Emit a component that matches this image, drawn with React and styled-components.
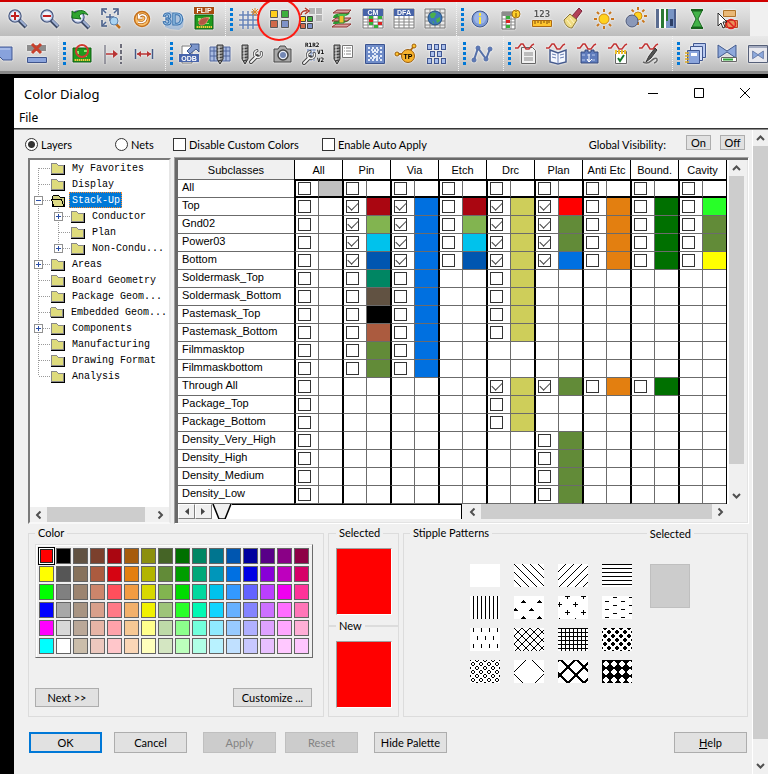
import React from 'react';
import styled, { createGlobalStyle, css } from 'styled-components';

const sans = "Lato, 'Liberation Sans', sans-serif";
const arial = "'Liberation Sans', Arial, sans-serif";
const mono = "'Liberation Mono', 'Courier New', monospace";

const GlobalStyle = createGlobalStyle`
  * {
    box-sizing: border-box;
  }

  body {
    margin: 0;
    background: #000;
    color: #000;
    font-family: ${sans};
    font-size: 11px;
    line-height: 14px;
  }

  button {
    font: inherit;
    color: inherit;
    padding: 0;
    margin: 0;
  }
`;

/* ---------- Toolbars ---------- */

const Toolbars = styled.header`
  border-top: 2px solid #d00000;
  border-bottom: 3px solid #8a8a8a;
  background: #f0f0f0;
  overflow: hidden;
`;

const ToolRow = styled.div`
  display: flex;
  height: ${({ $tall }) => ($tall ? '35px' : '34px')};
  padding-left: ${({ $inset }) => $inset || '0'};
  margin-right: ${({ $end }) => $end || '0'};
  background: linear-gradient(#e9e9e9, #d6d6d6 50%, #bcbcbc);
`;

const ToolGroup = styled.div`
  display: flex;
  flex: none;
  align-items: center;
  margin-left: ${({ $cut }) => ($cut ? '-10px' : '0')};
  padding-right: 6px;
  margin-right: 4px;
  border-right: 1px dotted #f4f4f4;

  &:last-child {
    border-right: 0;
  }
`;

const Grip = styled.span`
  width: 3px;
  height: 23px;
  background: repeating-linear-gradient(#0078d7 0 3px, transparent 3px 5px);
`;

const Tool = styled.button`
  position: relative;
  display: flex;
  align-items: center;
  justify-content: center;
  width: 31px;
  height: 30px;
  border: 0;
  background: none;

  svg {
    flex: none;
    filter: drop-shadow(0 0 1px #fff);
  }
`;

const Ring = styled.span`
  position: absolute;
  z-index: 2;
  top: -6px;
  left: -7px;
  width: 44px;
  height: 43px;
  border: 2px solid #ff1a12;
  border-radius: 50%;
`;

const Lens = ({ cx = 9, cy = 9 }) => (
  <g>
    <path d={`M${cx + 4} ${cy + 4}l7 7`} stroke="#3d4a66" strokeWidth="4" />
    <path d={`M${cx + 5} ${cy + 4}l6 6`} stroke="#9fb0d4" strokeWidth="2" />
    <circle cx={cx} cy={cy} r="6" fill="#f2f4fb" stroke="#4a5a80" strokeWidth="1.5" />
    <circle cx={cx} cy={cy} r="5" fill="none" stroke="#a9b8dc" />
  </g>
);

const Board = ({ y = 4 }) => (
  <g>
    <path d={`M3 ${y}h18v14H3z`} fill="#1f9a1f" stroke="#0c5c10" />
    <path d={`M4 ${y + 11}h16v2H4z`} fill="#e5d23a" />
    <path d={`M4 ${y + 12}h16`} stroke="#1a6a1a" strokeDasharray="1 1" />
    <path d={`M6 ${y + 3}h3v3H6zM14 ${y + 2}h4v2h-4zM8 ${y + 8}h9v1H8z`} fill="#8bea6a" />
  </g>
);

const Wave = () => (
  <path d="M0 6h3l3-4h2l3 5h3l3-4 2-1" fill="none" stroke="#c23434" strokeWidth="1.5" />
);

const Screw = ({ x = 9 }) => (
  <g>
    <path d={`M${x} 3h6v14l-3 5-3-5z`} fill="#9a9a9a" stroke="#333" />
    <path d={`M${x} 7l6-1M${x} 10l6-1M${x} 13l6-1M${x} 16l6-1M${x + 1} 19l4-1`} stroke="#333" />
    <path d={`M${x + 2} 4v14`} stroke="#e6e6e6" />
  </g>
);

const Wrench = ({ x = 0, y = 0 }) => (
  <g transform={`translate(${x} ${y})`} strokeLinecap="round">
    <path d="M2 12l6-6" stroke="#444" strokeWidth="4" />
    <circle cx="9" cy="4" r="3.5" fill="none" stroke="#444" strokeWidth="3" strokeDasharray="17 5" strokeDashoffset="2" />
    <circle cx="9" cy="4" r="3.5" fill="none" stroke="#f2f2f2" strokeWidth="1.5" strokeDasharray="17 5" strokeDashoffset="2" />
    <path d="M2 12l5-5" stroke="#f2f2f2" strokeWidth="2" />
  </g>
);

const Sun = ({ cx = 12, cy = 12, r = 5 }) => (
  <g>
    {[0, 45, 90, 135, 180, 225, 270, 315].map(deg => (
      <path
        key={deg}
        d={`M${cx} ${cy - r - 2}v-3`}
        stroke="#c8761c"
        strokeWidth="2"
        transform={`rotate(${deg} ${cx} ${cy})`}
      />
    ))}
    <circle cx={cx} cy={cy} r={r} fill="#ffd21e" stroke="#cf8a14" />
  </g>
);

const Sheet = ({ title }) => (
  <g>
    <path d="M2 2h20v19H2z" fill="#fff" stroke="#777" />
    <path d="M2 12h20M2 15h20M2 18h20M7 9v12M12 9v12M17 9v12" stroke="#888" />
    <path d="M2 2h20v7H2z" fill="#4763a8" />
    <text x="12" y="8" textAnchor="middle" fontSize="7" fontWeight="bold" fill="#fff" fontFamily={arial}>
      {title}
    </text>
  </g>
);

const Bowtie = ({ y = 4, s = 1 }) => (
  <path
    transform={`translate(${12 - 9 * s} ${y}) scale(${s})`}
    d="M0 0l9 6 9-6v13L9 7l-9 6z"
    fill="#8ea9dc"
    stroke="#3f5688"
  />
);

const glyphs = {
  'Zoom In': (
    <g>
      <Lens />
      <path d="M9 5v8M5 9h8" stroke="#c22020" strokeWidth="2" />
    </g>
  ),
  'Zoom Out': (
    <g>
      <Lens cx={10} />
      <path d="M6 9h8" stroke="#c22020" strokeWidth="2" />
    </g>
  ),
  'Zoom Previous': (
    <g>
      <Lens cx={10} cy={10} />
      <path d="M4 11V4l3 2c5-4 10-3 13 2-4-2-7-2-9 1l2 3z" fill="#2fa52f" stroke="#126b18" />
    </g>
  ),
  'Zoom Fit': (
    <g>
      <path d="M3 8V2h5M14 2h5v6M3 13v6h5" fill="none" stroke="#3f5680" strokeWidth="1.5" />
      <path d="M4 3l3 3M18 3l-3 3M4 18l3-3M11 7v7M7 10h8" stroke="#4b6595" strokeWidth="1.5" />
      <path d="M17 17l4 4" stroke="#bf6f1d" strokeWidth="2.5" />
      <circle cx="15" cy="14" r="4" fill="#a9d3f2" stroke="#5d82ac" />
    </g>
  ),
  Redraw: (
    <g>
      <circle cx="12" cy="12" r="7.5" fill="#fbc069" stroke="#c5701c" strokeWidth="1.5" />
      <path d="M8.5 7v4h4M9 10c2-4 8-2 7 2-1 4-5 4-8 3" fill="none" stroke="#b5651a" strokeWidth="3" />
      <path d="M8.5 7v4h4M9 10c2-4 8-2 7 2-1 4-5 4-8 3" fill="none" stroke="#fff" strokeWidth="1.5" />
    </g>
  ),
  '3D View': (
    <g>
      <path d="M4 7l5-3 3 2 7 1 4 5-1 8-4 3-9-1-5-2z" fill="#7fa3cf" opacity=".6" />
      <text
        x="12"
        y="18"
        textAnchor="middle"
        fontFamily={arial}
        fontSize="16"
        fontWeight="bold"
        fill="#9cc8ec"
        stroke="#3c71ab"
      >
        3D
      </text>
    </g>
  ),
  'Flip Board': (
    <g>
      <Board y={8} />
      <path d="M7 17c-1-5 5-7 10-6l-3 5c-2 2-5 3-7 1z" fill="#b35743" stroke="#e07a66" />
      <path d="M2 0h20v7H2z" fill="#a84c10" />
      <text x="12" y="6" textAnchor="middle" fontSize="7" fontWeight="bold" fill="#fff" fontFamily={arial}>FLIP</text>
    </g>
  ),
  Grid: (
    <g>
      <path d="M2 8h19M2 13h19M2 18h19M6 4v18M11 4v18M16 4v18" stroke="#6884b8" strokeWidth="1.5" />
      <path d="M18 1v8M14 5h8M15 2l6 6M21 2l-6 6" stroke="#d98521" />
    </g>
  ),
  Color: (
    <g stroke="#595959">
      <path d="M2.5 3.5h7v7h-7z" fill="#ffcf1c" />
      <path d="M13.5 3.5h7v7h-7z" fill="#3eb03e" />
      <path d="M2.5 13.5h7v7h-7z" fill="#cf6a4a" />
      <path d="M13.5 13.5h7v7h-7z" fill="#7f93c8" />
    </g>
  ),
  'Assign Color': (
    <g>
      <path d="M10 1h6v6h-6zM17 1h6v6h-6zM17 8h6v6h-6z" fill="#b4b4b4" />
      <path d="M2 8c0-3 3-5 6-4M6 1l4 3-4 3" fill="none" stroke="#b33a2a" strokeWidth="1.5" />
      <g stroke="#444">
        <path d="M1.5 9.5h5v5h-5z" fill="#ffcf1c" />
        <path d="M8.5 9.5h5v5h-5z" fill="#3eb03e" />
        <path d="M1.5 16.5h5v5h-5z" fill="#cf6a4a" />
        <path d="M8.5 16.5h5v5h-5z" fill="#7f93c8" />
      </g>
    </g>
  ),
  'Cross Section': (
    <g>
      <path d="M2 20h15l4-3H6z" fill="#d9a0a0" stroke="#8e2f2f" />
      <path d="M5 17c0-4 13-2 13-6M5 11c0-4 12-2 13-6" stroke="#2b9a34" strokeWidth="4" />
      <path d="M2 14h15l4-3H6z" fill="#d9a0a0" stroke="#8e2f2f" />
      <path d="M9 7h5v9H9z" fill="#f0c02c" stroke="#2b8a30" />
      <path d="M3 6h15l3-3H7z" fill="#d9a0a0" stroke="#8e2f2f" />
      <path d="M8 8h8" stroke="#49c04f" strokeWidth="2" />
    </g>
  ),
  'Constraint Manager': (
    <g>
      <Sheet title="CM" />
      <path d="M8 9h4v3H8zM17 9h4v3h-4zM8 15h4v3H8zM13 18h4v3h-4z" fill="#36b03a" />
      <path d="M8 12h4v3H8zM17 15h4v3h-4z" fill="#dd2222" />
    </g>
  ),
  'DFA Table': <Sheet title="DFA" />,
  'Global Sheet': (
    <g>
      <path d="M2 2h20v19H2z" fill="#e9e9e9" stroke="#777" />
      <path d="M2 6h20M2 10h20M2 14h20M2 18h20M7 2v19M12 2v19M17 2v19" stroke="#888" />
      <circle cx="12" cy="11" r="7" fill="#3d78b8" stroke="#24507f" />
      <path d="M7 8c1-3 5-3 6-1l-2 4H8zM13 12l4-2v4l-3 2zM9 14l2 1v2z" fill="#4cb04a" />
    </g>
  ),
  Info: (
    <g>
      <circle cx="12" cy="12" r="8" fill="#7a98d4" stroke="#43598c" />
      <circle cx="12" cy="11" r="6" fill="#9db5e6" />
      <path d="M11 6h2v3h-2zM11 10h2v7h-2z" fill="#ffe838" />
    </g>
  ),
  'Show Report': (
    <g>
      <path d="M3 5h13v17H3z" fill="#fff" stroke="#666" />
      <path d="M3 5h13v4H3z" fill="#8c8c8c" />
      <path d="M3 12h13M3 15h13M3 18h13M7 9v13M12 9v13" stroke="#888" />
      <path d="M7 9h4v3H7zM7 18h4v3H7z" fill="#36b03a" />
      <path d="M7 13h4v3H7z" fill="#dd2222" />
      <circle cx="17" cy="7" r="4" fill="#ffd12a" stroke="#a5701a" />
      <path d="M17 4v1M17 6v4" stroke="#7a4c00" />
    </g>
  ),
  Measure: (
    <g>
      <text x="12" y="10" textAnchor="middle" fontSize="9" fontWeight="bold" fill="#555" fontFamily="'DejaVu Sans Mono', monospace">123</text>
      <path d="M2.5 13.5h19v6h-19z" fill="#ffc52e" stroke="#ad6a12" />
      <path d="M5 14v3M8 14v2M11 14v3M14 14v2M17 14v3M19 14v2" stroke="#7d4a0a" />
    </g>
  ),
  Clean: (
    <g>
      <path d="M11 9l7-8 3 3-6 8z" fill="#b24058" stroke="#7a2036" />
      <path d="M9 7l7 6-5 8c-4 0-7-3-8-8z" fill="#f0dc84" stroke="#8a7634" />
      <path d="M6 13l4 5M9 11l4 5" stroke="#fff6c4" />
    </g>
  ),
  'Shadow Off': <Sun />,
  'Shadow On': (
    <g>
      <Sun cx={15} cy={9} r={4} />
      <circle cx="9" cy="14" r="6" fill="#8a98b8" stroke="#4c5878" />
    </g>
  ),
  Layers: (
    <g>
      <path d="M2 2h20v19H2z" fill="#7894c4" />
      <path d="M2 2h3v19H2z" fill="#5a6c90" />
      <path d="M5 2h2v19H5zM10 2h2v19h-2z" fill="#fff" />
      <path d="M7 2h3v19H7zM12 2h2v12h-2z" fill="#2a7a34" />
      <path d="M16 12h3v7h-3z" fill="#2d3f66" />
      <path d="M20 2h2v19h-2z" fill="#4a5d8c" />
    </g>
  ),
  Waive: (
    <g>
      <path d="M7 4h10l-4 8 4 8H7l4-8z" fill="#43b348" stroke="#17641c" />
      <path d="M6 3h12M6 21h12" stroke="#17641c" strokeWidth="2" />
    </g>
  ),
  'Drc Select': (
    <g>
      <path d="M7.5 3.5h12v6h-12z" fill="#e9b877" stroke="#b07328" />
      <path d="M9.5 13.5h12v7h-12z" fill="#e9905a" stroke="#b04a28" />
      <circle cx="15" cy="17" r="4.5" fill="none" stroke="#e02020" strokeWidth="1.5" />
      <path d="M12 14l6 6" stroke="#e02020" strokeWidth="1.5" />
      <path d="M2 6v13l3-3 2 5 2-1-2-5h4z" fill="#fff" stroke="#222" />
    </g>
  ),
  Shape: (
    <g>
      <path d="M0 5h18v13H9l-9-9z" fill="#88a2dc" stroke="#3e5590" />
      <path d="M2 7h14" stroke="#c6d4f4" />
    </g>
  ),
  'Delete Shape': (
    <g>
      <path d="M2 3h19v6H2z" fill="#8d8d8d" />
      <path d="M7 2l9 9M16 2l-9 9" stroke="#c8402c" strokeWidth="3" />
      <path d="M2.5 15.5h19v5h-19z" fill="#8ba4dc" stroke="#3f548c" />
    </g>
  ),
  'Board Circle': (
    <g>
      <Board y={6} />
      <circle cx="12" cy="9" r="6" fill="none" stroke="#cf3a30" strokeWidth="2" />
    </g>
  ),
  'Align Right': (
    <g>
      <path d="M4 3v19" stroke="#556" />
      <path d="M20 2v20" stroke="#445" strokeWidth="1.5" strokeDasharray="4 2" />
      <path d="M5 12h9" stroke="#b83434" strokeWidth="1.5" />
      <path d="M12 8l5 4-5 4z" fill="#b83434" />
    </g>
  ),
  'Spacing Width': (
    <g>
      <path d="M3.5 7v10M20.5 7v10" stroke="#445a85" strokeWidth="1.5" />
      <path d="M5 12h14" stroke="#b83434" strokeWidth="1.5" />
      <path d="M5 12l4-3v6zM19 12l-4-3v6z" fill="#b83434" />
    </g>
  ),
  ODB: (
    <g>
      <path d="M5 4h10v17H5z" fill="#fff" stroke="#777" />
      <path d="M10 9l5-5-2-2h9v8l-3-3-6 5z" fill="#7c96cc" stroke="#3f5688" />
      <path d="M2 12h20v8H2z" fill="#4865ac" />
      <text x="12" y="19" textAnchor="middle" fontSize="7" fontWeight="bold" fill="#fff" fontFamily={arial}>ODB</text>
    </g>
  ),
  'Drill Grid': (
    <g>
      <path d="M2 5h20v14H2z" fill="#a9bbe2" stroke="#4e659c" />
      <path d="M2 9h20M2 14h20M6 5v14M18 5v14" stroke="#4e659c" />
      <Screw />
    </g>
  ),
  'Drill Setup': (
    <g>
      <Screw x={3} />
      <Wrench x={10} y={8} />
    </g>
  ),
  Snapshot: (
    <g>
      <path d="M4 7h4l2-3h5l2 3h4v13H4z" fill="#a9a9a9" stroke="#444" />
      <circle cx="13" cy="13" r="5" fill="#e9eef8" stroke="#444" strokeWidth="1.5" />
      <circle cx="13" cy="13" r="3" fill="#7387b4" />
    </g>
  ),
  'Auto Rename': (
    <g>
      <path d="M6 8h9M6 11h9M6 14h9M7 7v12M10 7v12M13 7v12" stroke="#7d93c4" />
      <Wrench x={1} y={9} />
      <g fontFamily="'DejaVu Sans Mono', monospace" fontSize="6" fontWeight="bold" fill="#000">
        <text x="4" y="5">R1R2</text>
        <text x="16" y="12">V1</text>
        <text x="16" y="20">V2</text>
      </g>
    </g>
  ),
  'Drill Legend': (
    <g>
      <Screw x={2} />
      <path d="M10.5 3.5h10v12h-10z" fill="#fff" stroke="#777" />
      <path d="M12 6h1M14 6h5M12 9h1M14 9h5M12 12h1M14 12h5" stroke="#888" />
    </g>
  ),
  'Testprep Auto': (
    <g>
      <path d="M2.5 2.5h19v19h-19z" fill="#6f8cc8" stroke="#3a5390" />
      <path d="M5 6h15M5 10h15M5 14h15M5 18h15" stroke="#e5ecfa" strokeWidth="2" strokeDasharray="2 2" />
      <path d="M8 8h8M7 16h10M12 8v8" stroke="#fff" strokeWidth="1.5" strokeDasharray="2 1" />
    </g>
  ),
  Testpoint: (
    <g>
      <path d="M3 12h6M16 9l4-5" stroke="#b06e14" strokeWidth="2" />
      <circle cx="20" cy="4" r="2" fill="#ffc52e" stroke="#9a5c0c" />
      <circle cx="3" cy="12" r="2" fill="#ffc52e" stroke="#9a5c0c" />
      <circle cx="14" cy="14" r="6.5" fill="#f7b32c" stroke="#9a5c0c" />
      <text x="14" y="17" textAnchor="middle" fontSize="7" fontWeight="bold" fontFamily={arial} fill="#000">TP</text>
    </g>
  ),
  Placement: (
    <g fill="#a9bfec" stroke="#3f5590">
      {[[2, 3], [9, 3], [16, 3], [5, 10], [12, 10], [2, 17], [9, 17], [16, 17]].map(([x, y]) => (
        <rect key={`${x}-${y}`} x={x + 0.5} y={y - 0.5} width="4" height="5" />
      ))}
    </g>
  ),
  Route: (
    <g fill="#5c78b8" stroke="#5570a8">
      <path d="M4 18l4-12 8 11 4-10" fill="none" strokeWidth="2" />
      <circle cx="4" cy="18" r="2" />
      <circle cx="8" cy="6" r="2" />
      <circle cx="16" cy="17" r="2" />
      <circle cx="20" cy="7" r="2" />
    </g>
  ),
  'Wave Report': (
    <g>
      <path d="M6.5 5.5h11l3 3v13h-14z" fill="#f1f1f1" stroke="#666" />
      <path d="M9 11h9M9 13h9M9 16h9M9 18h9" stroke="#888" />
      <Wave />
    </g>
  ),
  'Wave Library': (
    <g>
      <path d="M4 8l8 3 8-3v12l-8 2-8-2z" fill="#f5f8ff" stroke="#44598c" strokeWidth="1.5" />
      <path d="M12 11v11M6 12l4 1M6 15l4 1M14 13l4-1M14 16l4-1" stroke="#6a80b4" />
      <Wave />
    </g>
  ),
  'Wave Audit': (
    <g>
      <path d="M4 10h4V8h3v2h3V8h3v2h4v11H4z" fill="#5f7cbc" stroke="#34497c" />
      <path d="M5 13h15M5 18h15" stroke="#b9c9ee" strokeDasharray="3 2" />
      <path d="M12 12v8M10 17l2 3 3-3" stroke="#fff" fill="none" />
      <Wave />
    </g>
  ),
  'Wave Check': (
    <g>
      <path d="M7.5 9.5h11v12h-11z" fill="#fff" stroke="#666" />
      <path d="M7 10h12" stroke="#efbf28" strokeWidth="4" strokeDasharray="2 1" />
      <path d="M10 16l2 3 4-6" fill="none" stroke="#17782a" strokeWidth="2" />
      <Wave />
    </g>
  ),
  'Wave Probe': (
    <g>
      <path d="M16 6l-6 8-3 6 5-4 6-8z" fill="#555" stroke="#333" />
      <path d="M4 20c4 2 6 1 8-1s5-4 6-2-2 4-3 4" fill="none" stroke="#666" strokeWidth="1.5" />
      <Wave />
    </g>
  ),
  Books: (
    <g>
      <path d="M9.5 1.5h12v14h-12z" fill="#b9caf0" stroke="#3f5690" />
      <path d="M6.5 4.5h12v14h-12z" fill="#d8e2f8" stroke="#3f5690" />
      <path d="M3.5 8.5h12v13h-12z" fill="#8ba5dc" stroke="#3f5690" />
      <path d="M7 11h6v3H7z" fill="#fff" />
      <path d="M1 11h4M1 14h4M1 17h4M1 20h4" stroke="#dba820" strokeWidth="1.5" />
    </g>
  ),
  'Net Progress': (
    <g>
      <Bowtie y={3} />
      <path d="M6.5 15.5h15v4h-15z" fill="#fff" stroke="#666" />
      <path d="M8 17.5h10" stroke="#2fa536" strokeWidth="2" />
    </g>
  ),
  'Net Window': (
    <g>
      <path d="M2.5 3.5h19v17h-19z" fill="#e8e8ee" stroke="#555f78" />
      <path d="M3 5h18" stroke="#a5acc0" strokeWidth="2" />
      <Bowtie y={9} s={0.6} />
    </g>
  ),
};

const topGroups = [
  ['Zoom In', 'Zoom Out', 'Zoom Previous', 'Zoom Fit', 'Redraw', '3D View', 'Flip Board'],
  ['Grid', 'Color', 'Assign Color', 'Cross Section', 'Constraint Manager', 'DFA Table', 'Global Sheet'],
  ['Info', 'Show Report', 'Measure', 'Clean', 'Shadow Off', 'Shadow On', 'Layers', 'Waive', 'Drc Select'],
];

const bottomGroups = [
  ['Shape', 'Delete Shape'],
  ['Board Circle', 'Align Right', 'Spacing Width'],
  ['ODB', 'Drill Grid', 'Drill Setup', 'Snapshot', 'Auto Rename', 'Drill Legend', 'Testprep Auto', 'Testpoint', 'Placement'],
  ['Route'],
  ['Wave Report', 'Wave Library', 'Wave Audit', 'Wave Check', 'Wave Probe'],
  ['Books', 'Net Progress', 'Net Window'],
];

const renderGroups = (groups, cut) => groups.map((names, i) => (
  <ToolGroup key={names[0]} $cut={cut && i === 0}>
    {i > 0 && <Grip />}
    {names.map(name => (
      <Tool key={name} type="button" aria-label={name}>
        <svg width="24" height="24" viewBox="0 0 24 24" fill="none">{glyphs[name]}</svg>
        {name === 'Color' && <Ring />}
      </Tool>
    ))}
  </ToolGroup>
));

/* ---------- Dialog frame ---------- */

const Dialog = styled.main`
  margin: 4px 0 1px 14px;
  background: #f0f0f0;
`;

const TitleBar = styled.div`
  display: flex;
  align-items: center;
  justify-content: space-between;
  height: 32px;
  padding-left: 10px;
  background: #fff;

  h1 {
    margin: 0;
    font: 400 13px/18px 'Noto Sans', sans-serif;
  }
`;

const WindowButton = styled.button`
  width: 46px;
  height: 32px;
  border: 0;
  background: none;

  svg {
    display: block;
    margin: 0 auto;
  }
`;

const MenuBar = styled.nav`
  height: 20px;
  padding-left: 5px;
  background: #fff;
  border-bottom: 2px groove #8a8a8a;

  button {
    display: block;
    border: 0;
    background: none;
    font: 400 12px/16px 'Noto Sans', sans-serif;
  }
`;

const DialogBody = styled.div`
  display: flex;
`;

const Content = styled.div`
  flex: 1;
  min-width: 0;
  padding: 0 3px 21px 14px;
  border-right: 1px solid #fff;
`;

const ScrollTrack = styled.div`
  display: flex;
  flex: ${({ $grow }) => ($grow ? '1' : 'none')};
  flex-direction: ${({ $vertical }) => ($vertical ? 'column' : 'row')};
  ${({ $vertical }) => ($vertical ? 'width: 15px;' : 'height: 15px;')}
  min-width: 0;
  background: #f0f0f0;
`;

const ScrollArrow = styled.button`
  display: flex;
  flex: none;
  align-items: center;
  justify-content: center;
  width: ${({ $size }) => $size}px;
  height: 16px;
  border: 0;
  background: none;

  svg {
    transform: rotate(${({ $turn }) => $turn}deg);
  }
`;

const ScrollThumb = styled.div`
  flex: 1;
  margin: ${({ $tail, $vertical }) => ($vertical ? `0 0 ${$tail}px` : `0 ${$tail}px 0 0`)};
  background: #cdcdcd;
`;

const Chevron = () => (
  <svg width="9" height="6" viewBox="0 0 9 6">
    <path d="M1 5l3.5-3.5L8 5" fill="none" stroke="#505050" strokeWidth="2" />
  </svg>
);

const ScrollBar = ({ vertical, tail, grow, label }) => (
  <ScrollTrack $vertical={vertical} $grow={grow}>
    <ScrollArrow type="button" $size={vertical ? 15 : 17} $turn={vertical ? 0 : -90} aria-label={`${label} back`}><Chevron /></ScrollArrow>
    <ScrollThumb $vertical={vertical} $tail={tail} />
    <ScrollArrow type="button" $size={vertical ? 15 : 17} $turn={vertical ? 180 : 90} aria-label={`${label} forward`}><Chevron /></ScrollArrow>
  </ScrollTrack>
);

/* ---------- Options row ---------- */

const Options = styled.div`
  display: flex;
  align-items: center;
  height: 27px;
  padding: 2px 4px 0 0;
`;

const Option = styled.label`
  display: flex;
  align-items: center;
  gap: 3px;
  width: ${({ $width }) => $width};
  white-space: nowrap;

  &:first-child {
    margin-left: -3px;
  }
`;

const Radio = styled.input`
  appearance: none;
  width: 13px;
  height: 13px;
  margin: 0;
  border: 1px solid #333;
  border-radius: 50%;
  background: #fff;

  &:checked {
    background: radial-gradient(#333 0 3px, #fff 4px);
  }
`;

const Check = styled.input`
  appearance: none;
  display: block;
  width: 13px;
  height: 13px;
  margin: 0;
  border: 1px solid #333;
  background: #fff;

  &:checked::after {
    content: '';
    display: block;
    width: 9px;
    height: 5px;
    margin: 1px 0 0 1px;
    border: solid #444;
    border-width: 0 0 1px 1px;
    transform: rotate(-45deg);
  }
`;

const Visibility = styled.div`
  display: flex;
  gap: 9px;
  margin-left: auto;

  span {
    margin-right: 11px;
  }
`;

const buttonLook = css`
  border: 1px solid #adadad;
  background: #e1e1e1;
`;

const SmallButton = styled.button`
  ${buttonLook}
  width: 25px;
  height: 15px;
  margin-top: -3px;
  line-height: 13px;
`;

/* ---------- Tree ---------- */

const Panels = styled.div`
  display: flex;
  gap: 3px;
`;

const TreePanel = styled.div`
  display: flex;
  flex-direction: column;
  flex: none;
  width: 143px;
  margin-top: 1px;
  border: 2px solid;
  border-color: #7a7a7a #e6e6e6 #f8f8f8 #7a7a7a;
  background: #fff;
`;

const TreeList = styled.ul`
  flex: 1;
  margin: 0;
  padding: 0;
  list-style: none;
  overflow: hidden;
`;

const TreeRow = styled.li`
  display: flex;
  align-items: center;
  height: 16px;
  font: 10px/15px ${mono};
  white-space: pre;
`;

const Guide = styled.span`
  flex: none;
  width: 20px;
  height: 16px;
  background:
    repeating-linear-gradient(90deg, #999 0 1px, transparent 1px 2px) 9px 8px / ${({ $branch }) => ($branch ? '12px' : '0')} 1px no-repeat,
    repeating-linear-gradient(#999 0 1px, transparent 1px 2px) 8px ${({ $from }) => $from || '0'} / 1px ${({ $tall }) => $tall || '16px'} no-repeat;
`;

const Expander = styled.button`
  display: block;
  width: 9px;
  height: 9px;
  margin: 4px;
  border: 1px solid #919191;
  background:
    linear-gradient(#2b4fa8, #2b4fa8) 1px 3px / 5px 1px no-repeat,
    linear-gradient(#2b4fa8, #2b4fa8) 3px 1px / 1px ${({ $open }) => ($open ? '0' : '5px')} no-repeat,
    #fff;
`;

const TreeLabel = styled.span`
  margin-left: 4px;
  padding: 1px 2px 0 3px;
  ${({ $selected }) => $selected && css`
    color: #fff;
    background: #0078d7;
    outline: 1px dotted #ff8728;
    outline-offset: -1px;
  `}
`;

const Folder = ({ open }) => (
  <svg width="15" height="13" viewBox="0 0 15 13" shapeRendering="crispEdges">
    {open ? (
      <g>
        <path d="M2 12V3l2-2h4l2 2h4v9z" fill="#d0ce80" stroke="#000" />
        <path d="M1 5h10l3 7H4z" fill="#dedb86" stroke="#000" />
      </g>
    ) : (
      <g>
        <path d="M1 11V2l1-1h4l2 2h5v8z" fill="#dedb7c" stroke="#888" />
        <path d="M1 12h13V3" fill="none" stroke="#000" strokeWidth="1" />
      </g>
    )}
  </svg>
);

const treeItems = [
  { name: 'My Favorites' },
  { name: 'Display' },
  { name: 'Stack-Up', toggle: 'open' },
  { name: 'Conductor', depth: 1, toggle: 'closed' },
  { name: 'Plan', depth: 1 },
  { name: 'Non-Condu...', depth: 1, toggle: 'closed', last: true },
  { name: 'Areas', toggle: 'closed' },
  { name: 'Board Geometry' },
  { name: 'Package Geom...' },
  { name: 'Embedded Geom...' },
  { name: 'Components', toggle: 'closed' },
  { name: 'Manufacturing' },
  { name: 'Drawing Format' },
  { name: 'Analysis', last: true },
];

const Tree = () => (
  <TreePanel>
    <TreeList role="tree">
      {treeItems.map((item, i) => (
        <TreeRow key={item.name} role="treeitem" aria-selected={item.name === 'Stack-Up'}>
          {item.depth && <Guide />}
          <Guide $branch $from={i === 0 ? '8px' : '0'} $tall={item.last ? '8px' : '16px'}>
            {item.toggle && <Expander type="button" $open={item.toggle === 'open'} aria-label={`Toggle ${item.name}`} />}
          </Guide>
          <Folder open={item.toggle === 'open'} />
          <TreeLabel $selected={item.name === 'Stack-Up'}>{item.name}</TreeLabel>
        </TreeRow>
      ))}
    </TreeList>
    <ScrollBar label="Tree" tail={7} />
  </TreePanel>
);

/* ---------- Layer table ---------- */

const TableFrame = styled.div`
  flex: 1;
  min-width: 0;
  border: 1px solid;
  border-color: #a0a0a0 #fff #fff #a0a0a0;
  background: #f0f0f0;
`;

const TableInner = styled.div`
  border: solid #696969;
  border-width: 2px 0 0 3px;
  box-shadow: inset -1px -1px #e3e3e3;
  padding: 0 4px 4px 0;
`;

const TableView = styled.div`
  display: flex;
  background: #fff;
`;

const TableScroll = styled.div`
  flex: 1;
  min-width: 0;
  overflow: hidden;
`;

const LayerTable = styled.table`
  width: 549px;
  table-layout: fixed;
  border-collapse: separate;
  border-spacing: 0;
  border-right: 1px solid #000;
  font: 11px/14px ${arial};

  th,
  td {
    padding: 0;
    font-weight: 400;
  }
`;

const HeadCell = styled.th`
  height: 20px;
  border-left: 1px solid #000;
  border-bottom: 1px solid #000;
  text-align: center;
`;

const CornerCell = styled(HeadCell)`
  border-left: 0;
  border-bottom-color: #6b6b6b;
  background: #f0f0f0;
`;

const NameCell = styled.th`
  height: 18px;
  border-bottom: 1px solid #6b6b6b;
  text-align: left;
  text-indent: 4px;
  line-height: 14px;
  vertical-align: top;
`;

const gridLine = css`
  border-bottom: ${({ $total }) => ($total ? '2px solid #000' : '1px solid #6b6b6b')};
  ${({ $total }) => $total && 'border-top: 1px solid #000;'}
`;

const CheckCell = styled.td`
  height: 18px;
  border-left: 2px solid #000;
  ${gridLine}

  input {
    margin-left: 2px;
  }
`;

const ColorCell = styled.td`
  height: 18px;
  border-left: 1px solid #6b6b6b;
  background: ${({ $color }) => $color || '#fff'};
  ${gridLine}
`;

const columns = ['All', 'Pin', 'Via', 'Etch', 'Drc', 'Plan', 'Anti Etc', 'Bound.', 'Cavity'];

const blue = '#0070e0';
const olive = '#cece5a';
const moss = '#628b38';
const orange = '#e37f10';
const forest = '#007000';

// Each cell is a colour, with a leading "+" when its box is ticked.
const layers = [
  ['All', { All: '#c0c0c0', Pin: '#fff', Via: '#fff', Etch: '#fff', Drc: '#fff', Plan: '#fff', 'Anti Etc': '#fff', 'Bound.': '#fff', Cavity: '#fff' }],
  ['Top', { Pin: '+#aa0611', Via: `+${blue}`, Etch: '#aa0611', Drc: `+${olive}`, Plan: '+#ff0000', 'Anti Etc': orange, 'Bound.': forest, Cavity: '#28ff28' }],
  ['Gnd02', { Pin: '+#82b450', Via: `+${blue}`, Etch: '#82b450', Drc: `+${olive}`, Plan: `+${moss}`, 'Anti Etc': orange, 'Bound.': forest, Cavity: moss }],
  ['Power03', { Pin: '+#00c2ec', Via: `+${blue}`, Etch: '#00c2ec', Drc: `+${olive}`, Plan: `+${moss}`, 'Anti Etc': orange, 'Bound.': forest, Cavity: moss }],
  ['Bottom', { Pin: '+#0056b0', Via: `+${blue}`, Etch: '#0056b0', Drc: `+${olive}`, Plan: `+${blue}`, 'Anti Etc': orange, 'Bound.': forest, Cavity: '#ffff00' }],
  ['Soldermask_Top', { Pin: '#008663', Via: blue, Drc: olive }],
  ['Soldermask_Bottom', { Pin: '#615242', Via: blue, Drc: olive }],
  ['Pastemask_Top', { Pin: '#000000', Via: blue, Drc: olive }],
  ['Pastemask_Bottom', { Pin: '#ab5b3f', Via: blue, Drc: olive }],
  ['Filmmasktop', { Pin: moss, Via: blue }],
  ['Filmmaskbottom', { Pin: moss, Via: blue }],
  ['Through All', { Drc: `+${olive}`, Plan: `+${moss}`, 'Anti Etc': orange, 'Bound.': forest }],
  ['Package_Top', { Drc: olive }],
  ['Package_Bottom', { Drc: olive }],
  ['Density_Very_High', { Plan: moss }],
  ['Density_High', { Plan: moss }],
  ['Density_Medium', { Plan: moss }],
  ['Density_Low', { Plan: moss }],
];

const SheetBar = styled.div`
  display: flex;
  height: 15px;
  padding-right: 15px;
`;

const SheetTabs = styled.div`
  display: flex;
  flex: none;
  width: 284px;
  margin-right: 2px;
  border-right: 1px solid #000;
  background: #fff;
`;

const SheetArrow = styled.button`
  width: 17px;
  height: 15px;
  border: 1px solid;
  border-color: #fff #808080 #808080 #fff;
  background: #f0f0f0;

  svg {
    display: block;
    margin: 0 auto;
  }
`;

const SheetEdge = styled.div`
  flex: 1;
  border-top: 1px solid #000;
`;

const LayerGrid = () => (
  <TableFrame>
    <TableInner>
      <TableView>
        <TableScroll>
          <LayerTable>
            <colgroup>
              <col width="116" />
              {columns.map(name => (
                <React.Fragment key={name}>
                  <col width="24" />
                  <col width="24" />
                </React.Fragment>
              ))}
            </colgroup>
            <thead>
              <tr>
                <CornerCell scope="col">Subclasses</CornerCell>
                {columns.map(name => <HeadCell key={name} scope="col" colSpan="2">{name}</HeadCell>)}
              </tr>
            </thead>
            <tbody>
              {layers.map(([layer, cells], row) => (
                <tr key={layer}>
                  <NameCell scope="row">{layer}</NameCell>
                  {columns.map((name) => {
                    const value = cells[name] || '';
                    const hasBox = name === 'All' || value;
                    return (
                      <React.Fragment key={name}>
                        <CheckCell $total={row === 0}>
                          {hasBox && <Check type="checkbox" defaultChecked={value[0] === '+'} aria-label={`${layer} ${name}`} />}
                        </CheckCell>
                        <ColorCell $total={row === 0} $color={value.replace('+', '')} />
                      </React.Fragment>
                    );
                  })}
                </tr>
              ))}
            </tbody>
          </LayerTable>
        </TableScroll>
        <ScrollBar vertical label="Rows" tail={24} />
      </TableView>
      <SheetBar>
        <SheetTabs>
          <SheetArrow type="button" aria-label="Previous sheet">
            <svg width="5" height="7"><path d="M5 0v7L1 3.5z" fill="#444" /></svg>
          </SheetArrow>
          <SheetArrow type="button" aria-label="Next sheet">
            <svg width="5" height="7"><path d="M0 0v7l4-3.5z" fill="#444" /></svg>
          </SheetArrow>
          <svg width="20" height="15" viewBox="0 0 20 15">
            <path d="M1 0l6 15h6l6-15" fill="#f0f0f0" stroke="#000" strokeWidth="1.5" />
          </svg>
          <SheetEdge />
        </SheetTabs>
        <ScrollBar label="Columns" grow tail={0} />
      </SheetBar>
    </TableInner>
  </TableFrame>
);

/* ---------- Colour and stipple area ---------- */

const Lower = styled.div`
  display: flex;
  gap: 4px;
  padding: 2px 1px 0 0;
`;

const Group = styled.fieldset`
  position: relative;
  flex: ${({ $width }) => ($width ? 'none' : '1')};
  width: ${({ $width }) => $width || 'auto'};
  min-width: 0;
  margin: ${({ $joined }) => ($joined ? '-7px 0 0' : '0')};
  padding: ${({ $pad }) => $pad || '0'};
  border: 1px solid #dcdcdc;

  legend {
    height: 14px;
    padding: 0 3px;
    margin-left: ${({ $pad }) => ($pad ? '0' : '6px')};
    background: #f0f0f0;
  }
`;

const Palette = styled.div`
  display: grid;
  grid-template-columns: repeat(16, 15px);
  gap: 2px;
  width: 278px;
  margin-top: 4px;
  padding: 3px;
  border: 1px solid;
  border-color: #dedede #6b6b6b #6b6b6b #dedede;
  box-shadow: inset 1px 1px #fff;
`;

const Swatch = styled.button`
  height: 16px;
  border: 1px solid #646464;
  background: ${({ $color }) => $color};
  ${({ $active }) => $active && css`
    border-color: #fff;
    box-shadow: 0 0 0 1px #000, inset 0 0 0 1px #222;
  `}
`;

const paletteRows = [
  'ff0000 000000 615242 7b402d aa0611 a65c0c 8c8f0e 456426 007000 008663 00758f 0056b0 00009e 580088 8a0086 8e0046',
  'ffff00 565656 87725c ab5b3f d60412 e37f10 b2b400 628b38 009e00 00a878 0096ba 0070e2 0000e4 8800d8 be00be d60068',
  '00ff00 808080 9c8470 cc856b ff4f5c f29c42 d8d800 82b450 00dc00 00d89e 00c2ec 3399ff 6363ff bb3fff f000f0 ff3399',
  '0000ff a8a8a8 a89482 d8a08b ff7a86 f2b06a f0f000 9ec47a 28ff28 00f8b4 12d4ff 66b0ff 8484ff cc70ff ff6cff ff76b8',
  'ff00ff d8d8d8 baa898 e6b5a6 ffa2aa f6c894 ffff8c bedaa8 8cff8c 72ffdc 90eaff 98caff b0b0ff dea2ff ffa6ff ffaed6',
  '00ffff ffffff cabdaa ecc8be ffc6ca fad6b6 ffffbc d4e6c2 bcffbc b0ffe6 b8f2ff c0e0ff c8c8ff e8c0ff ffc8ff ffc6ff',
];

const PaletteActions = styled.div`
  display: flex;
  justify-content: space-between;
  width: 277px;
  margin-top: 30px;
`;

const Button = styled.button`
  ${buttonLook}
  width: ${({ $width }) => $width || '73px'};
  height: ${({ $short }) => ($short ? '19px' : '21px')};
  line-height: 17px;

  &:disabled {
    color: #838383;
    background: #ccc;
    border-color: #bfbfbf;
  }
  ${({ $primary }) => $primary && 'border: 2px solid #0078d7;'}
`;

const Samples = styled.div`
  flex: none;
  width: 71px;
`;

const Sample = styled.div`
  width: 56px;
  height: 67px;
  margin-top: 8px;
  border: 1px solid;
  border-color: #a0a0a0 #fff #fff #a0a0a0;
  background: #f00;
`;

const StippleArea = styled.div`
  display: flex;
  gap: 18px;
  padding: 24px 0 0 66px;
`;

const StippleGrid = styled.div`
  display: grid;
  grid-template-columns: repeat(4, 30px);
  gap: 9px 14px;
`;

const StippleButton = styled.button`
  height: 23px;
  border: 0;
  background: #fff;

  svg {
    display: block;
  }
`;

const StippleSelected = styled.button`
  ${buttonLook}
  width: 40px;
  height: 44px;

  &:disabled {
    background: #ccc;
    border-color: #bfbfbf;
  }
`;

const EdgeLabel = styled.span`
  position: absolute;
  top: -13px;
  right: 53px;
  padding: 0 3px;
  background: #f0f0f0;
`;

// Tile width, tile height, origin and path of every fill.
const stipples = [
  { name: 'Solid', w: 8, h: 8, d: '' },
  { name: 'Diagonal down', w: 8, h: 8, d: 'M-1-1l10 10M-1 7l2 2M7-1l2 2' },
  { name: 'Diagonal up', w: 8, h: 8, d: 'M-1 9L9-1M-1 1l2-2M7 9l2-2' },
  { name: 'Horizontal', w: 4, h: 4, d: 'M0 .5h4' },
  { name: 'Vertical', w: 4, h: 4, x: 3, d: 'M.5 0v4' },
  { name: 'Triangles', w: 16, h: 16, x: 7, y: 4, fill: true, d: 'M2 0h1v1h1v1h1v1H0V2h1V1h1zM10 8h1v1h1v1h1v1H8v-1h1V9h1z' },
  { name: 'Plus', w: 16, h: 16, x: 7, y: 14, fill: true, d: 'M2 0h1v2h2v1H3v2H2V3H0V2h2zM10 8h1v2h2v1h-2v2h-1v-2H8v-1h2z' },
  { name: 'Dashes', w: 16, h: 8, x: 3, y: 5, d: 'M0 .5h4M8 4.5h4' },
  { name: 'Ticks', w: 8, h: 16, x: 3, d: 'M.5 0v4M4.5 8v4' },
  { name: 'Cross hatch', w: 8, h: 8, d: 'M0 0l8 8M0 8l8-8' },
  { name: 'Grid', w: 4, h: 4, x: 3, d: 'M.5 0v4M0 .5h4' },
  { name: 'Dots', w: 8, h: 8, x: 1, y: 6, fill: true, d: 'M1 0h2v1h1v2H3v1H1V3H0V1h1zM5 4h2v1h1v2H7v1H5V7H4V5h1z' },
  { name: 'Rings', w: 8, h: 8, x: 1, y: 2, fill: true, d: 'M1 0h2v1H1zM0 1h1v2H0zM3 1h1v2H3zM1 3h2v1H1zM5 4h2v1H5zM4 5h1v2H4zM7 5h1v2H7zM5 7h2v1H5z' },
  { name: 'Diamond', w: 32, h: 26, x: -1, d: 'M0 13L13 0M0 13l13 13M19 0l13 13M19 26l13-13' },
  { name: 'Lattice', w: 16, h: 16, x: 2, y: -1, d: 'M0 0l16 16M0 16L16 0', bold: true },
  { name: 'Checks', w: 8, h: 8, x: 4, y: 4, fill: true, d: 'M3 0h2v1h1v1h1v1h1v2H7v1H6v1H5v1H3V7H2V6H1V5H0V3h1V2h1V1h1z' },
];

const Stipple = ({ index, name, w, h, x = 0, y = 0, fill, bold, d }) => (
  <svg width="30" height="23" shapeRendering="crispEdges">
    <title>{name}</title>
    <pattern id={`stipple-${index}`} width={w} height={h} x={x} y={y} patternUnits="userSpaceOnUse">
      <path d={d} fill={fill ? '#000' : 'none'} stroke={fill ? 'none' : '#000'} strokeWidth={bold ? 1.5 : 1} />
    </pattern>
    <rect width="30" height="23" fill={`url(#stipple-${index})`} />
  </svg>
);

const Footer = styled.footer`
  display: flex;
  gap: 16px;
  padding: 15px 2px 0 1px;

  > :last-child {
    margin-left: auto;
  }
`;

const Pair = styled.div`
  display: flex;
  gap: ${({ $gap }) => $gap};
`;

const App = () => (
  <>
    <GlobalStyle />
    <Toolbars>
      <ToolRow $inset="2px" $end="18px">{renderGroups(topGroups)}</ToolRow>
      <ToolRow $tall>{renderGroups(bottomGroups, true)}</ToolRow>
    </Toolbars>
    <Dialog>
      <TitleBar>
        <h1>Color Dialog</h1>
        <div>
          <WindowButton type="button" aria-label="Minimize">
            <svg width="12" height="12"><path d="M1 6.5h10" stroke="#000" /></svg>
          </WindowButton>
          <WindowButton type="button" aria-label="Maximize">
            <svg width="12" height="12"><path d="M1.5 1.5h9v9h-9z" fill="none" stroke="#000" /></svg>
          </WindowButton>
          <WindowButton type="button" aria-label="Close">
            <svg width="12" height="12"><path d="M1 1l10 10M11 1L1 11" stroke="#000" /></svg>
          </WindowButton>
        </div>
      </TitleBar>
      <MenuBar><button type="button">File</button></MenuBar>
      <DialogBody>
        <Content>
          <Options>
            <Option $width="90px"><Radio type="radio" name="mode" defaultChecked />Layers</Option>
            <Option $width="58px"><Radio type="radio" name="mode" />Nets</Option>
            <Option $width="149px"><Check type="checkbox" />Disable Custom Colors</Option>
            <Option><Check type="checkbox" />Enable Auto Apply</Option>
            <Visibility>
              <span>Global Visibility:</span>
              <SmallButton type="button">On</SmallButton>
              <SmallButton type="button">Off</SmallButton>
            </Visibility>
          </Options>
          <Panels>
            <Tree />
            <LayerGrid />
          </Panels>
          <Lower>
            <Group $width="296px" $pad="0 6px 8px">
              <legend>Color</legend>
              <Palette>
                {paletteRows.join(' ').split(' ').map((hex, i) => (
                  <Swatch key={`${hex}-${i}`} type="button" $color={`#${hex}`} $active={i === 0} aria-label={`#${hex}`} />
                ))}
              </Palette>
              <PaletteActions>
                <Button type="button" $short $width="64px">{'Next >>'}</Button>
                <Button type="button" $short $width="79px">Customize ...</Button>
              </PaletteActions>
            </Group>
            <Samples>
              <Group $width="71px" $pad="0 7px 10px"><legend>Selected</legend><Sample /></Group>
              <Group $width="71px" $pad="0 7px 8px" $joined><legend>New</legend><Sample /></Group>
            </Samples>
            <Group>
              <legend>Stipple Patterns</legend>
              <EdgeLabel>Selected</EdgeLabel>
              <StippleArea>
                <StippleGrid>
                  {stipples.map((item, i) => (
                    <StippleButton key={item.name} type="button" aria-label={item.name}>
                      <Stipple index={i} {...item} />
                    </StippleButton>
                  ))}
                </StippleGrid>
                <StippleSelected type="button" disabled aria-label="Selected pattern" />
              </StippleArea>
            </Group>
          </Lower>
          <Footer>
            <Pair $gap="12px">
              <Button type="button" $primary>OK</Button>
              <Button type="button">Cancel</Button>
            </Pair>
            <Pair $gap="9px">
              <Button type="button" disabled>Apply</Button>
              <Button type="button" disabled>Reset</Button>
            </Pair>
            <Button type="button">Hide Palette</Button>
            <Button type="button"><u>H</u>elp</Button>
          </Footer>
        </Content>
        <ScrollBar vertical label="Dialog" tail={19} />
      </DialogBody>
    </Dialog>
  </>
);

export default App;
